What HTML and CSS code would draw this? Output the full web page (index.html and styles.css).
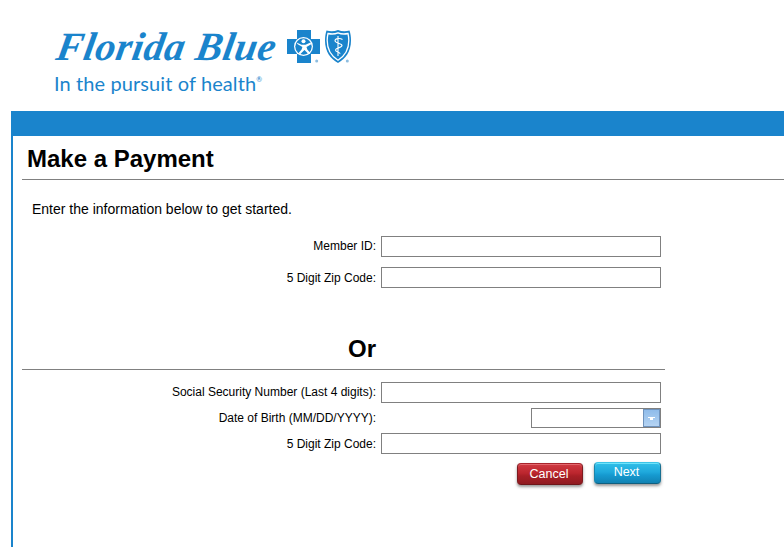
FILE: index.html
```html
<!DOCTYPE html>
<html lang="en">
<head>
<meta charset="utf-8">
<title>Make a Payment</title>
<link rel="stylesheet" href="styles.css">
</head>
<body>
<header class="masthead">
  <div class="brand">
    <div class="brand-top">
      <span class="wordmark">Florida Blue</span>
      <svg class="marks" width="66" height="38" viewBox="0 0 66 38" aria-hidden="true">
        <path fill="#1a84cc" d="M10 1h14v9h9v15h-9v9H10v-9H0V10h10z"/>
        <circle cx="16.500" cy="17.500" r="9.500" fill="#fff"/>
        <circle cx="16.500" cy="17.500" r="8.200" fill="#1a84cc"/>
        <circle cx="16.500" cy="12.300" r="2" fill="#fff"/>
        <path fill="#fff" d="M9.500 13.500l5 2.200h4l5-2.200.7 1.700-4.700 2.700.8 2.600 3 3.500-1.600 1.200-4.200-4.300h-.1l-4.200 4.300-1.600-1.200 3-3.500.8-2.600-4.700-2.700z"/>
        <circle cx="29.700" cy="32" r="1.500" fill="#8dbde0"/>
        <path fill="#1a84cc" d="M39.500 1.500c4 1.200 8 .9 11.500-.5 3.500 1.400 7.500 1.700 11.500.5 1 3 1.500 6 1.500 10 0 11-5.500 18.500-13 22.500-7.500-4-13-11.500-13-22.500 0-4 .5-7 1.500-10z"/>
        <path fill="none" stroke="#fff" stroke-width="1.300" d="M41 4.500c3.500.8 7 .6 10-.7 3 1.300 6.500 1.500 10 .7.500 2.200.8 4.500.8 7 0 9-4.300 15.700-10.800 19.700-6.500-4-10.800-10.700-10.800-19.700 0-2.500.3-4.800.8-7z"/>
        <path fill="none" stroke="#fff" stroke-width="1.100" d="M51 7v20M55.500 10.500c-2.500-1.500-7.500-1.200-7.500 1.300s7 2.300 7 4.700-6.500 2.300-6.500 4.500 5 2 4.500 4"/>
        <circle cx="60.300" cy="32" r="1.500" fill="#8dbde0"/>
      </svg>
    </div>
    <div class="tagline">In the pursuit of health<sup class="reg">®</sup></div>
  </div>
</header>

<main class="panel">
  <div class="panel-bar"></div>
  <h1 class="page-title">Make a Payment</h1>
  <p class="intro">Enter the information below to get started.</p>

  <form class="payment-form">
    <div class="fields first-fields">
      <label class="field-label label-high" for="member">Member ID:</label>
      <input class="text-input" id="member" type="text">
      <label class="field-label" for="zip1">5 Digit Zip Code:</label>
      <input class="text-input" id="zip1" type="text">
    </div>

    <h2 class="or-title">Or</h2>

    <div class="fields second-fields">
      <label class="field-label label-high" for="ssn">Social Security Number (Last 4 digits):</label>
      <input class="text-input" id="ssn" type="text">
      <label class="field-label" for="dob">Date of Birth (MM/DD/YYYY):</label>
      <div class="date-picker">
        <input class="date-input" id="dob" type="text">
        <span class="date-button"><span class="date-arrow"></span></span>
      </div>
      <label class="field-label" for="zip2">5 Digit Zip Code:</label>
      <input class="text-input" id="zip2" type="text">
    </div>

    <div class="actions">
      <button class="btn btn-cancel" type="button">Cancel</button>
      <button class="btn btn-next" type="button">Next</button>
    </div>
  </form>
</main>
</body>
</html>
```
FILE: styles.css
```css
* { box-sizing: border-box; }

html, body {
  margin: 0;
  padding: 0;
  height: 100%;
  overflow: hidden;
  background: #fff;
  font-family: "Liberation Sans", Arial, sans-serif;
  color: #000;
}

.masthead {
  height: 111px;
  padding: 29px 0 0 54px;
}

.brand-top {
  display: flex;
  align-items: flex-start;
  gap: 12px;
}

.wordmark {
  display: block;
  width: 221px;
  height: 36px;
  padding-left: 3px;
  font-family: "Liberation Serif", serif;
  font-style: italic;
  font-weight: 700;
  font-size: 40px;
  line-height: 36px;
  letter-spacing: 0.6px;
  color: #1a84cc;
  white-space: nowrap;
  transform: skewX(-10deg);
}

.marks {
  display: block;
  flex: none;
}

.tagline {
  margin-top: 5px;
  font-family: "Lato", sans-serif;
  font-size: 20px;
  letter-spacing: 0.1px;
  line-height: 22px;
  color: #1a84cc;
  white-space: nowrap;
}

.reg {
  font-size: 7px;
  line-height: 0;
  vertical-align: 9px;
}

.panel {
  margin-left: 11px;
  height: 436px;
  border-left: 2px solid #1a84cc;
}

.panel-bar {
  height: 25px;
  margin-left: -2px;
  background: #1a84cc;
}

.page-title {
  margin: 0 0 0 9px;
  padding: 9px 0 6px 5px;
  height: 44px;
  border-bottom: 1px solid #808080;
  font-size: 24px;
  line-height: 28px;
  font-weight: 700;
}

.intro {
  margin: 21px 0 0 19px;
  font-size: 14px;
  line-height: 17px;
}

.payment-form {
  width: 643px;
  margin: 18px 0 0 9px;
}

.fields {
  display: grid;
  grid-template-columns: 354px 280px;
  column-gap: 5px;
  align-items: center;
}

.first-fields { row-gap: 10px; }
.second-fields { row-gap: 5px; margin-top: 12px; }

.field-label {
  justify-self: end;
  font-size: 12px;
  line-height: 14px;
  white-space: nowrap;
}

.label-high { margin-bottom: 2px; }

.text-input {
  display: block;
  width: 280px;
  height: 21px;
  margin: 0;
  padding: 1px 3px;
  border: 1px solid #808080;
  border-radius: 0;
  background: #fff;
  outline: none;
}

.or-title {
  margin: 46px 0 0;
  padding: 1px 0 5px 37px;
  height: 36px;
  border-bottom: 1px solid #808080;
  font-size: 24px;
  line-height: 28px;
  font-weight: 700;
  text-align: center;
}

.date-picker {
  display: flex;
  justify-self: end;
  width: 130px;
  height: 20px;
  border: 1px solid #808080;
}

.date-input {
  flex: 1;
  min-width: 0;
  border: 0;
  padding: 0 3px;
  margin: 0;
  outline: none;
  background: #fff;
}

.date-button {
  display: flex;
  align-items: center;
  justify-content: center;
  width: 17px;
  border: 1px solid #6f93bd;
  background: linear-gradient(#8fbcea, #b5d4f3);
}

.date-arrow {
  display: block;
  width: 7px;
  height: 3px;
  border-top: 1px solid #fff;
  background: linear-gradient(#fff, #fff) center 0 / 3px 2px no-repeat;
}

.actions {
  display: flex;
  justify-content: flex-end;
  align-items: flex-start;
  gap: 11px;
  margin-top: 8px;
  padding-right: 4px;
}

.btn {
  width: 66px;
  height: 22px;
  padding: 0 2px 0 0;
  border: 1px solid;
  border-radius: 4px;
  color: #fff;
  font-family: "Liberation Sans", Arial, sans-serif;
  font-size: 12.500px;
  line-height: 18px;
}

.btn-cancel {
  margin-top: 1px;
  border-color: #a8242b #7d1a1f #6e1418 #7d1a1f;
  background: linear-gradient(#cf3a42 0, #bc262e 45%, #a81f26 60%, #8f1a20 100%);
  box-shadow: 0 2px 3px rgba(50, 50, 50, .5), inset 0 1px 0 #e3676d;
}

.btn-next {
  width: 67px;
  padding-bottom: 3px;
  border-color: #3cc4e8 #176f91 #105f7f #1b85ab;
  background: linear-gradient(#31bfe8 0, #1fa9dc 45%, #169ad0 60%, #1182b3 100%);
  box-shadow: 0 2px 3px rgba(50, 50, 50, .5), inset 0 1px 0 #6fe3fa;
}
```
